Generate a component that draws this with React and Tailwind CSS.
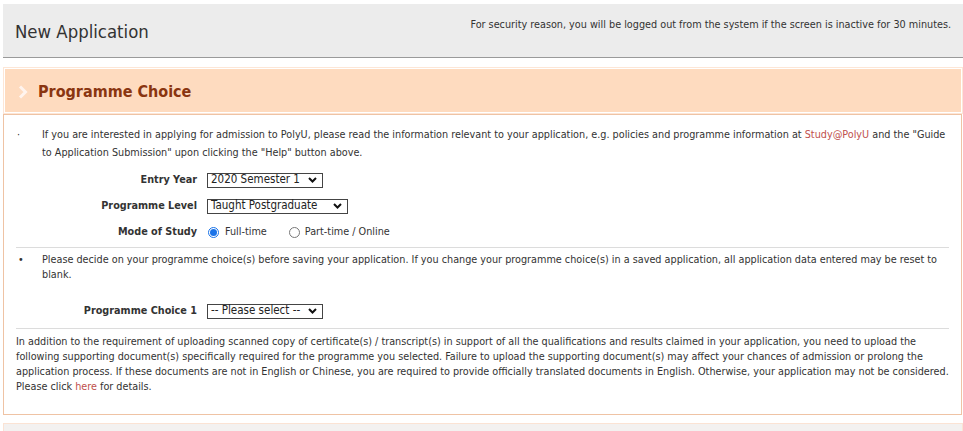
import React from "react";

const font = { fontFamily: "'DejaVu Sans Condensed', 'DejaVu Sans', sans-serif" };

const Select = ({ width, value }) => (
  <div className={`flex items-center justify-between border border-[#444] bg-white h-[15px] pl-[3px] pr-[5px] text-[11.5px] text-[#222] ${width}`}>
    <span className="leading-none">{value}</span>
    <svg width="9" height="6" viewBox="0 0 9 6">
      <path d="M1 1l3.5 3.5L8 1" stroke="#111" strokeWidth="2" fill="none" />
    </svg>
  </div>
);

const Radio = ({ checked }) => (
  <span className={`w-[11px] h-[11px] rounded-full border flex items-center justify-center bg-white ${checked ? "border-[#1a73e8]" : "border-[#777]"}`}>
    {checked && <span className="w-[7px] h-[7px] rounded-full bg-[#1a73e8]" />}
  </span>
);

const FieldRow = ({ label, children }) => (
  <div className="flex items-center h-[16px]">
    <div className="w-[191px] text-right font-bold text-[10.75px] text-[#333] pr-[10px]">{label}</div>
    {children}
  </div>
);

export default function App() {
  return (
    <div className="w-[963px] h-[431px] overflow-hidden bg-white text-[#333]" style={font}>
      {/* Header */}
      <div className="mt-[4px] ml-[3px] h-[54px] bg-[#ececec] border-b border-[#9a9a9a] flex items-start justify-between">
        <h1 className="text-[18.4px] text-[#333] mt-[19px] ml-[12px] leading-none">New Application</h1>
        <p className="text-[10.75px] text-[#333] mt-[13px] mr-[12px]">
          For security reason, you will be logged out from the system if the screen is inactive for 30 minutes.
        </p>
      </div>

      {/* Section title */}
      <div className="mt-[9px] ml-[3px] border border-[#fde6d6] p-[1px]">
        <div className="h-[43px] bg-[#fedbbf] flex items-center gap-[10px] pl-[13px] pt-[2px]">
          <svg width="10" height="14" viewBox="0 0 10 14">
            <path d="M2 1.5l5.5 5.5L2 12.5" stroke="#fff4ee" strokeWidth="3" fill="none" />
          </svg>
          <h2 className="text-[16px] font-bold text-[#8a3510]">Programme Choice</h2>
        </div>
      </div>

      {/* Content */}
      <div className="ml-[3px] mr-[1px] h-[301px] border border-[#efc3a4] pl-[12px] pr-[10px] pt-[11px]">
        <div className="flex text-[10.75px] leading-[18px]">
          <span className="w-[26px] shrink-0 pl-[1px]">·</span>
          <p className="flex-1">
            If you are interested in applying for admission to PolyU, please read the information relevant to your application, e.g. policies and programme information at <span className="text-[#c0504d]">Study@PolyU</span> and the "Guide to Application Submission" upon clicking the "Help" button above.
          </p>
        </div>

        <div className="flex flex-col gap-[10px] mt-[10px] pb-[4px]">
          <FieldRow label="Entry Year">
            <Select width="w-[116px]" value="2020 Semester 1" />
          </FieldRow>
          <FieldRow label="Programme Level">
            <Select width="w-[141px]" value="Taught Postgraduate" />
          </FieldRow>
          <FieldRow label="Mode of Study">
            <div className="flex items-center text-[10.75px] ml-[1px]">
              <Radio checked />
              <span className="ml-[6px]">Full-time</span>
              <span className="ml-[22px]"><Radio /></span>
              <span className="ml-[5px]">Part-time / Online</span>
            </div>
          </FieldRow>
        </div>

        <div className="border-t border-[#dcdcdc] mt-[3px] mr-[2px]" />

        <div className="flex text-[10.75px] leading-[15px] pt-[4px]">
          <span className="w-[26px] shrink-0 pl-[2px]">•</span>
          <p className="flex-1 pr-[10px]">
            Please decide on your programme choice(s) before saving your application. If you change your programme choice(s) in a saved application, all application data entered may be reset to blank.
          </p>
        </div>

        <div className="mt-[21px] mb-[9px]">
          <FieldRow label="Programme Choice 1">
            <Select width="w-[116px]" value="-- Please select --" />
          </FieldRow>
        </div>

        <div className="border-t border-[#dcdcdc] mr-[2px]" />

        <p className="text-[10.75px] leading-[15px] pt-[5px]">
          In addition to the requirement of uploading scanned copy of certificate(s) / transcript(s) in support of all the qualifications and results claimed in your application, you need to upload the following supporting document(s) specifically required for the programme you selected. Failure to upload the supporting document(s) may affect your chances of admission or prolong the application process. If these documents are not in English or Chinese, you are required to provide officially translated documents in English. Otherwise, your application may not be considered. Please click <span className="text-[#c0504d]">here</span> for details.
        </p>
      </div>

      {/* Next section (cut off) */}
      <div className="mt-[8px] ml-[3px] h-[20px] border border-[#fbe3d4] bg-[#f3f1f0]" />
    </div>
  );
}
